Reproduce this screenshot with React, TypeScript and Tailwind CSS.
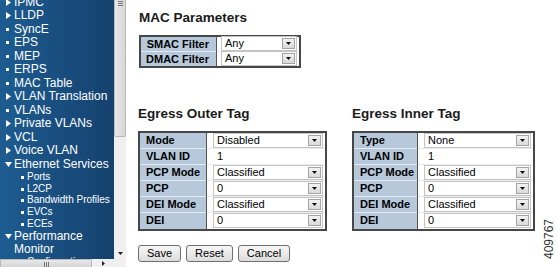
type NavItem = { label: string; kind: "closed" | "open" | "leaf" | "sub" };

const nav: NavItem[] = [
  { label: "IPMC", kind: "closed" },
  { label: "LLDP", kind: "closed" },
  { label: "SyncE", kind: "leaf" },
  { label: "EPS", kind: "leaf" },
  { label: "MEP", kind: "leaf" },
  { label: "ERPS", kind: "leaf" },
  { label: "MAC Table", kind: "leaf" },
  { label: "VLAN Translation", kind: "closed" },
  { label: "VLANs", kind: "leaf" },
  { label: "Private VLANs", kind: "closed" },
  { label: "VCL", kind: "closed" },
  { label: "Voice VLAN", kind: "closed" },
  { label: "Ethernet Services", kind: "open" },
  { label: "Ports", kind: "sub" },
  { label: "L2CP", kind: "sub" },
  { label: "Bandwidth Profiles", kind: "sub" },
  { label: "EVCs", kind: "sub" },
  { label: "ECEs", kind: "sub" },
  { label: "Performance Monitor", kind: "open" },
  { label: "Configuration", kind: "sub" },
];

function NavIcon({ kind }: { kind: NavItem["kind"] }) {
  if (kind === "closed")
    return (
      <svg width="5" height="7" viewBox="0 0 5 7" className="mt-[3px]">
        <path d="M0 0 L5 3.5 L0 7 Z" fill="white" />
      </svg>
    );
  if (kind === "open")
    return (
      <svg width="7" height="5" viewBox="0 0 7 5" className="mt-[4px] -ml-[1px]">
        <path d="M0 0 L7 0 L3.5 5 Z" fill="white" />
      </svg>
    );
  return <div className="mt-[5px] h-[3px] w-[3px] bg-white" />;
}

function Sidebar() {
  return (
    <div className="flex h-full w-[126px] flex-col">
      <div className="flex min-h-0 flex-1">
        <div className="w-[114px] overflow-hidden bg-gradient-to-r from-[#1d5c91] to-[#15416e] text-white">
          <div className="-mt-[4.7px]">
            {nav.map((item) =>
              item.kind === "sub" ? (
                <div key={item.label} className="flex h-[11.8px] items-start whitespace-nowrap pl-[21px] text-[10px] leading-[11.8px]">
                  <div className="mt-[5px] mr-[3px] h-[3px] w-[3px] shrink-0 bg-white" />
                  <span>{item.label}</span>
                </div>
              ) : (
                <div key={item.label} className="flex items-start py-[0.5px] pl-[6px] text-[12px] leading-[12.5px]">
                  <div className="flex w-[8px] shrink-0 justify-start">
                    <NavIcon kind={item.kind} />
                  </div>
                  <span className="pr-[2px]">{item.label}</span>
                </div>
              )
            )}
          </div>
        </div>
        <div className="flex w-[12px] flex-col bg-[#f0f0f0]">
          <div className="flex h-[137px] items-start justify-center rounded-b-[2px] border border-t-0 border-[#b9b9b9] bg-gradient-to-r from-[#e8e8e8] to-[#d6d6d6]">
            <div className="mt-[1px] flex flex-col gap-[1px]">
              <div className="h-px w-[5px] bg-[#777]" />
              <div className="h-px w-[5px] bg-[#777]" />
              <div className="h-px w-[5px] bg-[#777]" />
            </div>
          </div>
          <div className="flex-1" />
          <div className="flex h-[12px] items-center justify-center">
            <svg width="5" height="3" viewBox="0 0 5 3">
              <path d="M0 0 L5 0 L2.5 3 Z" fill="#222" />
            </svg>
          </div>
        </div>
      </div>
      <div className="flex h-[8px]">
        <div className="flex w-[114px] items-start bg-[#f0f0f0]">
          <div className="flex h-full w-[92px] justify-center rounded-tr-[2px] border border-b-0 border-[#b9b9b9] bg-gradient-to-b from-[#e8e8e8] to-[#d6d6d6]">
            <div className="mt-[2px] flex gap-[1px]">
              <div className="h-[5px] w-px bg-[#777]" />
              <div className="h-[5px] w-px bg-[#777]" />
              <div className="h-[5px] w-px bg-[#777]" />
            </div>
          </div>
          <div className="flex flex-1 justify-center pt-[2px]">
            <svg width="3" height="5" viewBox="0 0 3 5">
              <path d="M0 0 L3 2.5 L0 5 Z" fill="#222" />
            </svg>
          </div>
        </div>
        <div className="w-[12px] bg-[#f0f0f0]" />
      </div>
    </div>
  );
}

function Select({ value }: { value: string }) {
  return (
    <div className="flex h-[15px] flex-1 items-center border border-[#c4c4c4] bg-white">
      <span className="flex-1 pl-[3px] leading-[13px]">{value}</span>
      <div className="mr-[1px] flex h-[11px] w-[13px] items-center justify-center border border-[#a4a4a4] bg-gradient-to-b from-[#f2f2f2] to-[#d9d9d9]">
        <svg width="5" height="3" viewBox="0 0 5 3">
          <path d="M0 0 L5 0 L2.5 3 Z" fill="#111" />
        </svg>
      </div>
    </div>
  );
}

type Row = { label: string; value: string; input?: boolean };

function ParamTable({
  rows,
  labelW,
  valueW,
  rowH,
  alignRight,
  selLeft,
}: {
  rows: Row[];
  labelW: string;
  valueW: string;
  rowH: string;
  alignRight?: boolean;
  selLeft: string;
}) {
  return (
    <div className="inline-flex border-2 border-[#474747]">
      <div className={`${labelW} flex flex-col border-r border-[#555] bg-[#b6c8da]`}>
        {rows.map((r, i) => (
          <div
            key={r.label}
            className={`${rowH} flex items-center font-bold ${alignRight ? "justify-end pr-[7px]" : "pl-[6px]"} ${i < rows.length - 1 ? "border-b border-[#e4ebf2]" : ""}`}
          >
            {r.label}
          </div>
        ))}
      </div>
      <div className={`${valueW} flex flex-col bg-white`}>
        {rows.map((r, i) => (
          <div
            key={r.label}
            className={`${rowH} flex items-center ${selLeft} pr-[2px] ${i < rows.length - 1 ? "border-b border-[#ececec]" : ""}`}
          >
            {r.input ? (
              <div className="flex h-[15px] flex-1 items-center pl-[4px]">{r.value}</div>
            ) : (
              <Select value={r.value} />
            )}
          </div>
        ))}
      </div>
    </div>
  );
}

const outerRows: Row[] = [
  { label: "Mode", value: "Disabled" },
  { label: "VLAN ID", value: "1", input: true },
  { label: "PCP Mode", value: "Classified" },
  { label: "PCP", value: "0" },
  { label: "DEI Mode", value: "Classified" },
  { label: "DEI", value: "0" },
];

const innerRows: Row[] = [
  { label: "Type", value: "None" },
  { label: "VLAN ID", value: "1", input: true },
  { label: "PCP Mode", value: "Classified" },
  { label: "PCP", value: "0" },
  { label: "DEI Mode", value: "Classified" },
  { label: "DEI", value: "0" },
];

function Button({ children }: { children: string }) {
  return (
    <button className="h-[17px] rounded-[3px] border border-[#707070] bg-gradient-to-b from-[#f7f7f7] to-[#dcdcdc] px-[8px] text-[11px] leading-[15px] text-black">
      {children}
    </button>
  );
}

export default function App() {
  return (
    <div className="relative flex h-[267px] w-[557px] overflow-hidden bg-white font-['Liberation_Sans',Arial,sans-serif] text-[11px] text-black">
      <Sidebar />
      <div className="flex-1 pl-[12px] pt-[10px]">
        <h2 className="pl-[1px] text-[13.5px] font-bold leading-[16px] text-[#1a1a1a]">MAC Parameters</h2>
        <div className="mt-[9px] pl-[1px]">
          <ParamTable
            rows={[
              { label: "SMAC Filter", value: "Any" },
              { label: "DMAC Filter", value: "Any" },
            ]}
            labelW="w-[76px]"
            valueW="w-[82px]"
            rowH="h-[14.5px]"
            alignRight
            selLeft="pl-[4px]"
          />
        </div>
        <div className="mt-[38px] flex gap-[25px]">
          <div>
            <h2 className="text-[13.5px] font-bold leading-[16px] text-[#1a1a1a]">Egress Outer Tag</h2>
            <div className="mt-[8.5px]">
              <ParamTable rows={outerRows} labelW="w-[67px]" valueW="w-[118px]" rowH="h-[16px]" selLeft="pl-[6px]" />
            </div>
          </div>
          <div>
            <h2 className="text-[13.5px] font-bold leading-[16px] text-[#1a1a1a]">Egress Inner Tag</h2>
            <div className="mt-[8.5px]">
              <ParamTable rows={innerRows} labelW="w-[64px]" valueW="w-[115px]" rowH="h-[16px]" selLeft="pl-[6px]" />
            </div>
          </div>
        </div>
        <div className="mt-[14px] flex gap-[5px]">
          <Button>Save</Button>
          <Button>Reset</Button>
          <Button>Cancel</Button>
        </div>
      </div>
      <div className="absolute left-[528px] top-[233px] h-[12px] w-[42px] -rotate-90 text-center text-[12px] leading-[12px] text-[#333]">
        409767
      </div>
    </div>
  );
}
